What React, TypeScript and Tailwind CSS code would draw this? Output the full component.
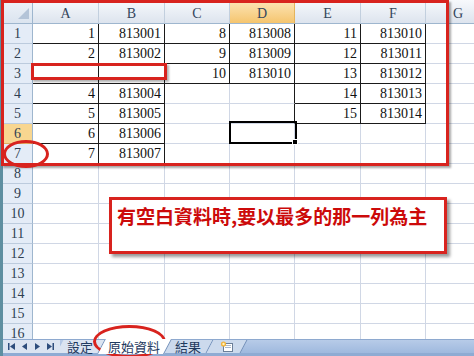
import React from "react";

const COLS = [
  { k: "A", w: "w-[66px]" },
  { k: "B", w: "w-[66px]" },
  { k: "C", w: "w-[65px]" },
  { k: "D", w: "w-[65px]" },
  { k: "E", w: "w-[66px]" },
  { k: "F", w: "w-[65px]" },
  { k: "G", w: "w-[65px]" },
];

const DATA: Record<number, string[]> = {
  1: ["1", "813001", "8", "813008", "11", "813010"],
  2: ["2", "813002", "9", "813009", "12", "813011"],
  3: ["", "", "10", "813010", "13", "813012"],
  4: ["4", "813004", "", "", "14", "813013"],
  5: ["5", "813005", "", "", "15", "813014"],
  6: ["6", "813006"],
  7: ["7", "813007"],
};

const blackRight = (r: number, c: number) =>
  (c <= 1 && r <= 7) || (c === 2 && r <= 3) || (c >= 3 && c <= 5 && r <= 5);
const blackBottom = (r: number, c: number) =>
  (c <= 1 && r <= 7) ||
  ((c === 2 || c === 3) && r <= 3) ||
  ((c === 4 || c === 5) && r <= 5);

const ROWS = Array.from({ length: 16 }, (_, i) => i + 1);

function HeaderRow() {
  return (
    <div className="flex h-[24px] shrink-0">
      <div className="relative h-full w-[30px] shrink-0 border-r border-b border-r-[#9eb6ce] border-b-[#9eb6ce] bg-linear-to-b from-[#eef3f9] to-[#dbe4ef]">
        <svg className="absolute right-[3px] bottom-[4px]" width="11" height="11" viewBox="0 0 11 11">
          <polygon points="11,0 11,11 0,11" fill="#b4c4d8" />
        </svg>
      </div>
      {COLS.map((c) => (
        <div
          key={c.k}
          className={`${c.w} h-full shrink-0 border-r border-b border-b-[#9eb6ce] pt-[4px] text-center text-[14px] leading-[19px] text-[#34465c] ${
            c.k === "D"
              ? "border-r-[#e4b45c] bg-linear-to-b from-[#fce6b8] to-[#f5c56e]"
              : "border-r-[#c2cfde] bg-linear-to-b from-[#f7f9fc] to-[#dde4ee]"
          }`}
        >
          {c.k}
        </div>
      ))}
    </div>
  );
}

function DataRow({ r }: { r: number }) {
  const vals = DATA[r] || [];
  return (
    <div className="flex h-[20px] shrink-0">
      <div
        className={`h-full w-[30px] shrink-0 border-r border-b border-r-[#9eb6ce] text-center text-[14px] leading-[19px] text-[#2f3f52] ${
          r === 6 ? "border-b-[#e0b060] bg-[#f8d690]" : "border-b-[#bccbdd] bg-[#e4ecf7]"
        }`}
      >
        {r}
      </div>
      {COLS.map((c, ci) => (
        <div
          key={c.k}
          className={`${c.w} h-full shrink-0 border-r border-b pr-[3px] text-right text-[14px] leading-[19px] text-[#111] ${
            blackRight(r, ci) ? "border-r-[#1a1a1a]" : "border-r-[#d0d7e5]"
          } ${blackBottom(r, ci) ? "border-b-[#1a1a1a]" : "border-b-[#d0d7e5]"}`}
        >
          {vals[ci] || ""}
        </div>
      ))}
    </div>
  );
}

function NavIcon({ kind }: { kind: "first" | "prev" | "next" | "last" }) {
  return (
    <svg width="7" height="7" viewBox="0 0 7 7">
      {kind === "first" && (
        <>
          <rect x="0" y="0" width="1.5" height="7" fill="#2d4d7c" />
          <polygon points="7,0 7,7 2,3.5" fill="#2d4d7c" />
        </>
      )}
      {kind === "prev" && <polygon points="6,0 6,7 1,3.5" fill="#2d4d7c" />}
      {kind === "next" && <polygon points="1,0 1,7 6,3.5" fill="#2d4d7c" />}
      {kind === "last" && (
        <>
          <polygon points="0,0 0,7 5,3.5" fill="#2d4d7c" />
          <rect x="5.5" y="0" width="1.5" height="7" fill="#2d4d7c" />
        </>
      )}
    </svg>
  );
}

function TabBar() {
  const tabText = "text-[13px] leading-[13px] text-[#1f3a5f] font-['Noto_Sans_CJK_TC','Noto_Sans_CJK_SC',sans-serif]";
  return (
    <div className="flex h-[17px] shrink-0 flex-col">
      <div className="flex h-[14px] border-t border-t-[#8ea9cf] bg-linear-to-b from-[#b7cbe8] to-[#9fb9de]">
        <div className="flex h-full w-[57px] shrink-0 items-center gap-[6px] bg-[#dbe4f1] pl-[5px]">
          <NavIcon kind="first" />
          <NavIcon kind="prev" />
          <NavIcon kind="next" />
          <NavIcon kind="last" />
        </div>
        <div className="flex h-full">
          <div className="flex h-full w-[42px] -skew-x-[28deg] items-center justify-center border-r border-r-[#6f8db8] bg-[#dbe4f1]">
            <span className={`skew-x-[28deg] ${tabText}`}>設定</span>
          </div>
          <div className="z-10 -mt-[1px] flex h-[15px] w-[66px] -skew-x-[28deg] items-center justify-center border-r border-r-[#6f8db8] bg-white">
            <span className={`skew-x-[28deg] ${tabText}`}>原始資料</span>
          </div>
          <div className="flex h-full w-[42px] -skew-x-[28deg] items-center justify-center border-r border-r-[#6f8db8] bg-[#ccdaed]">
            <span className={`skew-x-[28deg] ${tabText}`}>結果</span>
          </div>
          <div className="flex h-full w-[34px] -skew-x-[28deg] items-center justify-center border-r border-r-[#6f8db8] bg-[#ccdaed]">
            <span className="skew-x-[28deg]">
              <svg width="14" height="11" viewBox="0 0 14 11">
                <rect x="3.5" y="2.5" width="9" height="8" fill="#ffffff" stroke="#6b7f99" />
                <rect x="5" y="4" width="6" height="1" fill="#a9b8cc" />
                <rect x="5" y="6" width="6" height="1" fill="#a9b8cc" />
                <circle cx="3.5" cy="3" r="2.6" fill="#f3b43a" />
                <circle cx="3.5" cy="3" r="1.2" fill="#fff3c4" />
              </svg>
            </span>
          </div>
        </div>
      </div>
      <div className="h-[3px] bg-[#8fabd3]" />
    </div>
  );
}

export default function App() {
  return (
    <div className="relative h-[356px] w-[474px] overflow-hidden bg-white font-['Liberation_Serif',serif]">
      <div className="flex h-full">
        <div className="h-full w-[3px] shrink-0 bg-[#5e8fa1]" />
        <div className="flex h-full min-w-0 flex-1 flex-col">
          <div className="flex h-[339px] shrink-0 flex-col overflow-hidden">
            <HeaderRow />
            {ROWS.map((r) => (
              <DataRow key={r} r={r} />
            ))}
          </div>
          <TabBar />
        </div>
      </div>

      {/* selected cell D6 */}
      <div className="absolute left-[229px] top-[121px] h-[23px] w-[68px] border-2 border-black" />
      <div className="absolute left-[292px] top-[139px] h-[6px] w-[6px] border border-white bg-black" />

      {/* red annotation boxes */}
      <div className="absolute left-[1px] top-[0px] h-[166px] w-[448px] border-[3px] border-[#d8231e] shadow-[2px_2px_2px_rgba(0,0,0,0.35)]" />
      <div className="absolute left-[31px] top-[63px] h-[17px] w-[136px] border-[3px] border-[#d8231e] shadow-[2px_2px_2px_rgba(0,0,0,0.3)]" />

      <div className="absolute left-[109px] top-[197px] h-[57px] w-[338px] border-[3px] border-[#d8231e] bg-white pl-[5px] pt-[6px] shadow-[3px_3px_3px_rgba(0,0,0,0.4)]">
        <div className="whitespace-nowrap text-[19px] font-bold leading-none text-[#cc0a0a] font-['Noto_Sans_CJK_TC','Noto_Sans_CJK_SC',sans-serif]">
          有空白資料時,要以最多的那一列為主
        </div>
      </div>

      {/* ellipses */}
      <div className="absolute left-[3px] top-[140px] h-[28px] w-[46px] rounded-[50%] border-[3px] border-[#d8231e]" />
      <div className="absolute left-[93px] top-[325px] h-[33px] w-[73px] rounded-[50%] border-[3px] border-[#d8231e]" />
    </div>
  );
}
